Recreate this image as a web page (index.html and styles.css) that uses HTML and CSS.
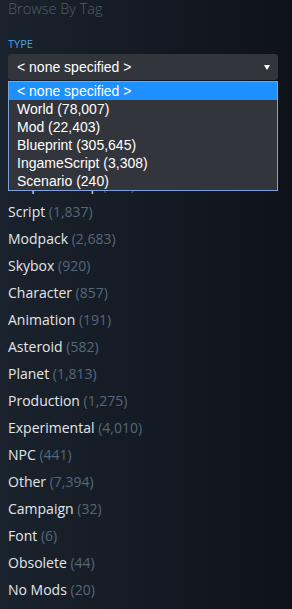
FILE: index.html
```html
<!DOCTYPE html>
<html lang="en">
<head>
    <meta charset="UTF-8">
    <meta name="viewport" content="width=device-width, initial-scale=1.0">
    <title>Browse By Tag</title>
    <link rel="stylesheet" href="styles.css">
</head>
<body>

<div class="sidebar">
    <h3 class="browse-title">Browse By Tag</h3>
    <div class="filter-label">TYPE</div>

    <div class="select-wrap">
        <div class="select-box">
            <span>&lt; none specified &gt;</span>
            <span class="select-arrow"></span>
        </div>
        <ul class="select-menu">
            <li class="selected">&lt; none specified &gt;</li>
            <li>World (78,007)</li>
            <li>Mod (22,403)</li>
            <li>Blueprint (305,645)</li>
            <li>IngameScript (3,308)</li>
            <li>Scenario (240)</li>
        </ul>
    </div>

    <ul class="tag-list">
        <li>Respawn Ship <span class="count">(310)</span></li>
        <li>Script <span class="count">(1,837)</span></li>
        <li>Modpack <span class="count">(2,683)</span></li>
        <li>Skybox <span class="count">(920)</span></li>
        <li>Character <span class="count">(857)</span></li>
        <li>Animation <span class="count">(191)</span></li>
        <li>Asteroid <span class="count">(582)</span></li>
        <li>Planet <span class="count">(1,813)</span></li>
        <li>Production <span class="count">(1,275)</span></li>
        <li>Experimental <span class="count">(4,010)</span></li>
        <li>NPC <span class="count">(441)</span></li>
        <li>Other <span class="count">(7,394)</span></li>
        <li>Campaign <span class="count">(32)</span></li>
        <li>Font <span class="count">(6)</span></li>
        <li>Obsolete <span class="count">(44)</span></li>
        <li>No Mods <span class="count">(20)</span></li>
    </ul>
</div>

</body>
</html>
```

FILE: styles.css
```css
html, body {
    margin: 0;
    padding: 0;
    height: 100%;
}

body {
    font-family: "Open Sans", "Noto Sans", sans-serif;
    background: linear-gradient(to right, #1a222d, #0e1319);
    overflow: hidden;
}

.sidebar {
    width: 270px;
    padding: 1px 8px 0;
}

.browse-title {
    margin: 0;
    font-size: 14.5px;
    font-weight: 300;
    line-height: 16px;
    color: #525e6b;
}

.filter-label {
    margin-top: 20px;
    font-size: 11px;
    line-height: 14px;
    color: #4aa3e4;
}

.select-wrap {
    position: relative;
    margin-top: 3px;
}

.select-box {
    display: flex;
    align-items: center;
    justify-content: space-between;
    height: 26px;
    padding: 0 8px 0 9px;
    background-color: #32353c;
    border-radius: 3px;
    font-family: "Liberation Sans", Arial, sans-serif;
    font-size: 14px;
    color: #ffffff;
}

.select-arrow {
    width: 0;
    height: 0;
    border-left: 3px solid transparent;
    border-right: 3px solid transparent;
    border-top: 5px solid #ffffff;
    margin-top: 1px;
}

/* open dropdown, drawn over the tag list */
.select-menu {
    position: absolute;
    top: 27px;
    left: 0;
    right: 0;
    margin: 0;
    padding: 0;
    list-style-type: none;
    background-color: #32353c;
    border: 1px solid #7ea2dc;
    font-family: "Liberation Sans", Arial, sans-serif;
    font-size: 14px;
    color: #ffffff;
    z-index: 2;
}

.select-menu li {
    height: 18px;
    line-height: 18px;
    padding-left: 8px;
}

.select-menu li.selected {
    background-color: #1e90ff;
}

.tag-list {
    list-style-type: none;
    margin: 91px 0 0;
    padding: 0;
}

.tag-list li {
    font-size: 14px;
    line-height: 27px;
    color: #e3e6e9;
    white-space: nowrap;
}

.tag-list .count {
    color: #55687a;
}
```
